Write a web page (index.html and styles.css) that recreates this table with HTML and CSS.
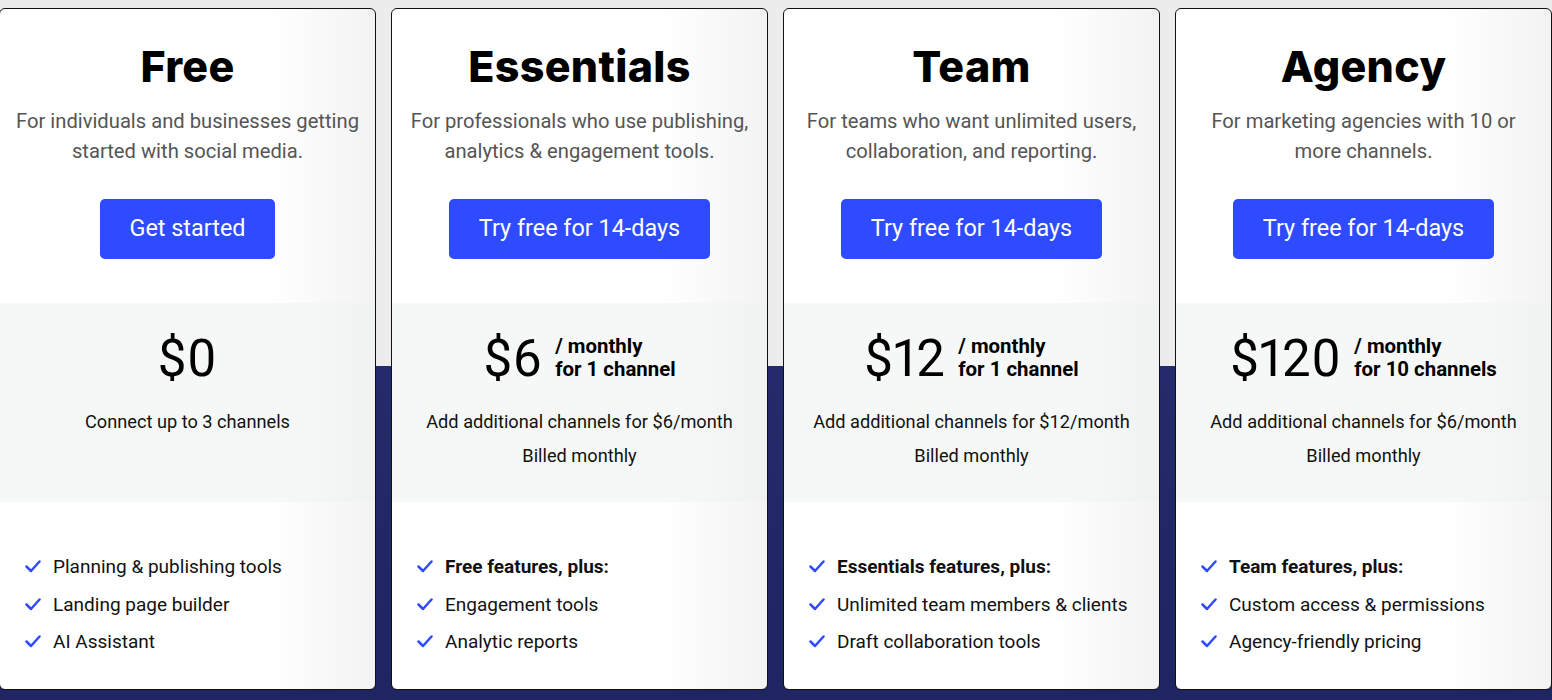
FILE: index.html
```html
<!DOCTYPE html>
<html lang="en">
<head>
<meta charset="utf-8">
<title>Pricing</title>
<link rel="stylesheet" href="styles.css">
</head>
<body>
<div class="page">
  <div class="plans">
    <div class="card">
      <div class="head">
        <h2 class="title">Free</h2>
        <p class="desc">For individuals and businesses getting started with social media.</p>
        <a class="btn" href="#">Get started</a>
      </div>
      <div class="price">
        <div class="price-row"><span class="amount">$0</span></div>
        <p class="note">Connect up to 3 channels</p>
      </div>
      <ul class="features">
        <li><svg class="check" viewBox="0 0 16 13"><path d="M1.5 6.5 L6 11 L14.5 1.5" /></svg>Planning &amp; publishing tools</li>
        <li><svg class="check" viewBox="0 0 16 13"><path d="M1.5 6.5 L6 11 L14.5 1.5" /></svg>Landing page builder</li>
        <li><svg class="check" viewBox="0 0 16 13"><path d="M1.5 6.5 L6 11 L14.5 1.5" /></svg>AI Assistant</li>
      </ul>
    </div>
    <div class="card">
      <div class="head">
        <h2 class="title">Essentials</h2>
        <p class="desc">For professionals who use publishing, analytics &amp; engagement tools.</p>
        <a class="btn" href="#">Try free for 14-days</a>
      </div>
      <div class="price">
        <div class="price-row"><span class="amount">$6</span><span class="per">/ monthly<br>for 1 channel</span></div>
        <p class="note">Add additional channels for $6/month</p>
        <p class="note">Billed monthly</p>
      </div>
      <ul class="features">
        <li class="strong"><svg class="check" viewBox="0 0 16 13"><path d="M1.5 6.5 L6 11 L14.5 1.5" /></svg>Free features, plus:</li>
        <li><svg class="check" viewBox="0 0 16 13"><path d="M1.5 6.5 L6 11 L14.5 1.5" /></svg>Engagement tools</li>
        <li><svg class="check" viewBox="0 0 16 13"><path d="M1.5 6.5 L6 11 L14.5 1.5" /></svg>Analytic reports</li>
      </ul>
    </div>
    <div class="card">
      <div class="head">
        <h2 class="title">Team</h2>
        <p class="desc">For teams who want unlimited users, collaboration, and reporting.</p>
        <a class="btn" href="#">Try free for 14-days</a>
      </div>
      <div class="price">
        <div class="price-row"><span class="amount">$12</span><span class="per">/ monthly<br>for 1 channel</span></div>
        <p class="note">Add additional channels for $12/month</p>
        <p class="note">Billed monthly</p>
      </div>
      <ul class="features">
        <li class="strong"><svg class="check" viewBox="0 0 16 13"><path d="M1.5 6.5 L6 11 L14.5 1.5" /></svg>Essentials features, plus:</li>
        <li><svg class="check" viewBox="0 0 16 13"><path d="M1.5 6.5 L6 11 L14.5 1.5" /></svg>Unlimited team members &amp; clients</li>
        <li><svg class="check" viewBox="0 0 16 13"><path d="M1.5 6.5 L6 11 L14.5 1.5" /></svg>Draft collaboration tools</li>
      </ul>
    </div>
    <div class="card">
      <div class="head">
        <h2 class="title">Agency</h2>
        <p class="desc">For marketing agencies with 10 or more channels.</p>
        <a class="btn" href="#">Try free for 14-days</a>
      </div>
      <div class="price">
        <div class="price-row"><span class="amount">$120</span><span class="per">/ monthly<br>for 10 channels</span></div>
        <p class="note">Add additional channels for $6/month</p>
        <p class="note">Billed monthly</p>
      </div>
      <ul class="features">
        <li class="strong"><svg class="check" viewBox="0 0 16 13"><path d="M1.5 6.5 L6 11 L14.5 1.5" /></svg>Team features, plus:</li>
        <li><svg class="check" viewBox="0 0 16 13"><path d="M1.5 6.5 L6 11 L14.5 1.5" /></svg>Custom access &amp; permissions</li>
        <li><svg class="check" viewBox="0 0 16 13"><path d="M1.5 6.5 L6 11 L14.5 1.5" /></svg>Agency-friendly pricing</li>
      </ul>
    </div>
  </div>
</div>
</body>
</html>
```
FILE: styles.css
```css
* { box-sizing: border-box; }
html, body {
  margin: 0;
  padding: 0;
}
body {
  font-family: Roboto, "Liberation Sans", sans-serif;
  color: #111;
  background: linear-gradient(180deg, #ececec 0, #ececec 366px, #242a6b 366px, #1f2462 700px);
  height: 700px;
  overflow: hidden;
}
.page {
  padding-top: 8px;
}
.plans {
  display: flex;
  gap: 15px;
  margin-left: -1px;
}
.card {
  width: 377px;
  height: 682px;
  flex: none;
  border: 1px solid #111;
  border-radius: 6px;
  overflow: hidden;
  background: linear-gradient(90deg, #fff 0, #fff 72%, #f3f3f3 100%);
  display: flex;
  flex-direction: column;
}
.head {
  padding-top: 31px;
  display: flex;
  flex-direction: column;
  align-items: center;
  text-align: center;
  height: 294px;
}
.title {
  margin: 0;
  font-family: Inter, "Open Sans", sans-serif;
  font-weight: 800;
  font-size: 43px;
  line-height: 52px;
  letter-spacing: 0.3px;
  color: #000;
}
.desc {
  margin: 14px 0 0;
  padding: 0 10px;
  font-size: 20.2px;
  line-height: 30px;
  color: #555;
}
.btn {
  margin-top: 33px;
  height: 60px;
  padding: 0 30px 3px;
  display: flex;
  align-items: center;
  background: #2e4bff;
  color: #fff;
  text-decoration: none;
  font-size: 23.4px;
  border-radius: 5px;
}
.price {
  height: 199px;
  background: linear-gradient(90deg, #f6f8f7 0, #f6f8f7 80%, #f0f1f1 100%);
  padding-top: 25px;
  text-align: center;
}
.price-row {
  display: flex;
  justify-content: center;
  align-items: center;
  gap: 13px;
  height: 62px;
}
.amount {
  font-size: 51px;
  line-height: 62px;
  letter-spacing: 0.5px;
  font-variant-numeric: proportional-nums;
  color: #000;
}
.per {
  text-align: left;
  font-size: 20.4px;
  font-weight: 700;
  line-height: 23px;
  color: #000;
  margin-top: -2px;
}
.note {
  margin: 0;
  font-size: 18.2px;
  line-height: 34px;
  color: #111;
}
.price-row + .note {
  margin-top: 15px;
}
.features {
  list-style: none;
  margin: 0;
  padding: 46px 0 0 25px;
}
.features li {
  display: flex;
  align-items: center;
  font-size: 19px;
  line-height: 37.5px;
  color: #111;
}
.features li.strong {
  font-weight: 700;
}
.check {
  width: 16px;
  height: 13px;
  margin-right: 12px;
  fill: none;
  stroke: #2e4bff;
  stroke-width: 2.5;
  stroke-linecap: round;
  stroke-linejoin: round;
}
```
